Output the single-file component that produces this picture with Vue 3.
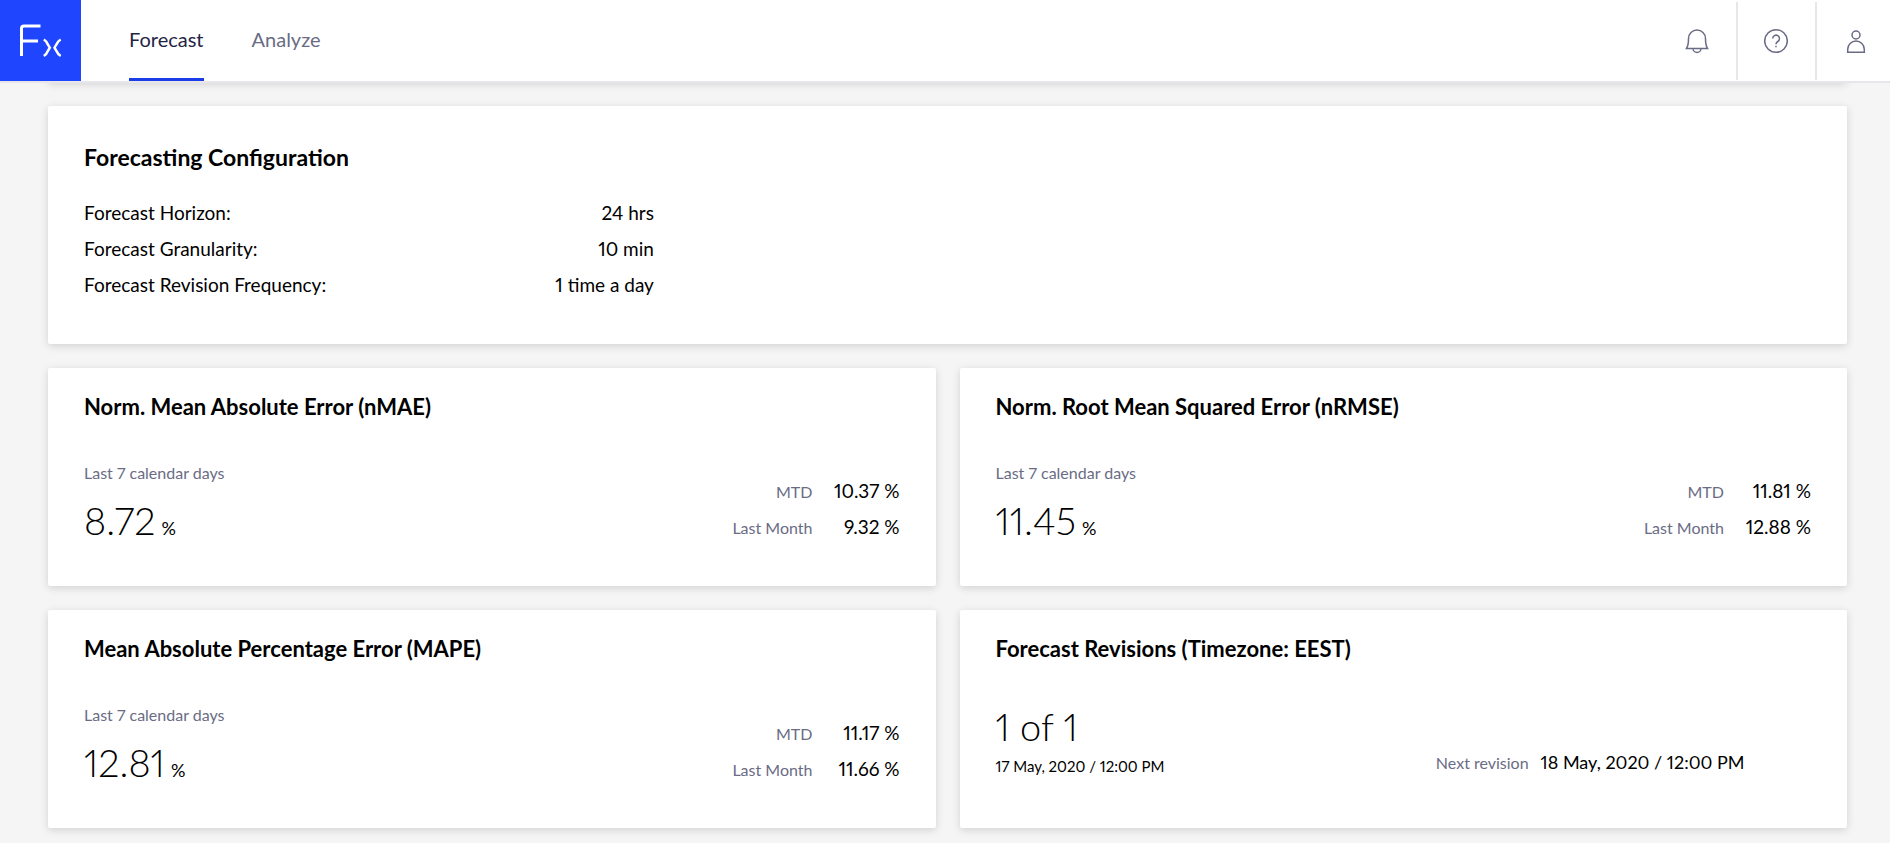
<script setup>
import { ref } from 'vue';

const tabs = ['Forecast', 'Analyze'];
const activeTab = ref('Forecast');

const configuration = [
  { label: 'Forecast Horizon:', value: '24 hrs' },
  { label: 'Forecast Granularity:', value: '10 min' },
  { label: 'Forecast Revision Frequency:', value: '1 time a day' }
];

const metrics = [
  { title: 'Norm. Mean Absolute Error (nMAE)', week: '8.72', mtd: '10.37', lastMonth: '9.32' },
  { title: 'Norm. Root Mean Squared Error (nRMSE)', week: '11.45', mtd: '11.81', lastMonth: '12.88' },
  { title: 'Mean Absolute Percentage Error (MAPE)', week: '12.81', mtd: '11.17', lastMonth: '11.66' }
];
</script>

<template>
  <div class="page">
    <header class="header">
      <a class="logo" href="#" aria-label="Fx home">
        <svg width="81" height="81" viewBox="0 0 81 81" fill="none" stroke="#fff">
          <path d="M21.500 56V28.500q0-2.500 2.500-2.500H40.500M22 41H38" stroke-width="3" />
          <path d="M43.800 39.500Q46.500 41 47.800 44.500L49.800 47.700L47.800 51Q46.500 54.500 43.800 56M60.700 39.500Q58 41 56.500 44.500L54.500 47.700L56.500 51Q58 54.500 60.700 56" stroke-width="2.500" />
        </svg>
      </a>
      <nav class="tabs">
        <a
          v-for="tab in tabs"
          :key="tab"
          href="#"
          class="tab"
          :class="{ active: tab === activeTab }"
          @click.prevent="activeTab = tab"
        >{{ tab }}</a>
      </nav>
      <div class="actions">
        <button class="action" type="button" aria-label="Notifications">
          <svg width="24" height="26" viewBox="0 0 24 26">
            <path d="M1.500 20.500C3 18 3.500 15 3.500 10.500a8.500 8.500 0 0 1 17 0C20.500 15 21 18 22.500 20.500z" />
            <path d="M8 20.500a4 4 0 0 0 8 0" />
          </svg>
        </button>
        <button class="action" type="button" aria-label="Help">
          <svg width="24" height="26" viewBox="0 0 24 26">
            <circle cx="12" cy="13" r="11.300" />
            <path d="M8.700 10.500a3.400 3.400 0 1 1 5.100 3q-1.800 1-1.800 2.700M12 17.700v1.600" />
          </svg>
        </button>
        <button class="action" type="button" aria-label="Account">
          <svg width="24" height="26" viewBox="0 0 24 26">
            <circle cx="12" cy="7" r="4" />
            <path d="M3.700 24.300v-3a8.300 8.300 0 0 1 16.600 0v3z" />
          </svg>
        </button>
      </div>
    </header>

    <main class="content">
      <section class="card tucked"></section>

      <section class="card config">
        <h2>Forecasting Configuration</h2>
        <dl class="config-list">
          <div v-for="item in configuration" :key="item.label" class="config-row">
            <dt>{{ item.label }}</dt>
            <dd>{{ item.value }}</dd>
          </div>
        </dl>
      </section>

      <div class="grid">
        <section v-for="metric in metrics" :key="metric.title" class="card metric">
          <h2>{{ metric.title }}</h2>
          <div class="metric-body">
            <div>
              <div class="label">Last 7 calendar days</div>
              <div class="big">{{ metric.week }}<span class="unit">%</span></div>
            </div>
            <dl class="side">
              <dt class="label">MTD</dt>
              <dd>{{ metric.mtd }} %</dd>
              <dt class="label">Last Month</dt>
              <dd>{{ metric.lastMonth }} %</dd>
            </dl>
          </div>
        </section>

        <section class="card metric">
          <h2>Forecast Revisions (Timezone: EEST)</h2>
          <div class="revision-body">
            <div class="current">
              <div class="big">1 of 1</div>
              <div class="date">17 May, 2020 / 12:00 PM</div>
            </div>
            <div class="next">
              <span class="label">Next revision</span>
              <span class="next-date">18 May, 2020 / 12:00 PM</span>
            </div>
          </div>
        </section>
      </div>
    </main>
  </div>
</template>

<style>
body {
  margin: 0;
  background: #f5f5f5;
}
</style>

<style scoped>
.page {
  font-family: Lato, "Liberation Sans", sans-serif;
  font-size: 19px;
  line-height: 24px;
  color: #000;
  font-feature-settings: "pnum";
}

.header {
  position: relative;
  z-index: 1;
  display: flex;
  height: 81px;
  background: #fff;
  border-bottom: 2px solid #e6e6eb;
}

.logo {
  width: 81px;
  background: #1f45ff;
}

.logo svg {
  display: block;
}

.tabs {
  display: flex;
  gap: 48px;
  margin-left: 48px;
}

.tab {
  box-sizing: border-box;
  padding-top: 27px;
  border-bottom: 3px solid transparent;
  color: #6a6c85;
  font-size: 20px;
  text-decoration: none;
}

.tab.active {
  color: #1f2544;
  border-bottom-color: #1a3de8;
}

.actions {
  display: flex;
  margin: 2px 0 1px auto;
}

.action {
  box-sizing: border-box;
  width: 79px;
  padding: 0 2px 0 0;
  border: 0;
  border-left: 2px solid #e6e6eb;
  background: none;
}

.action:first-child {
  border-left-color: transparent;
}

.action:last-child {
  width: 75px;
  padding: 0 0 0 4px;
}

.action svg {
  display: block;
  margin: 0 auto;
  fill: none;
  stroke: #6a6c85;
  stroke-width: 1.5;
}

.content {
  padding: 0 43px 14px 48px;
}

.card {
  background: #fff;
  border-radius: 2px;
  box-shadow: 0 2px 8px rgba(0, 0, 0, 0.15);
}

/* lower edge of the card scrolled under the header */
.tucked {
  height: 24px;
  margin-top: -25px;
}

.config {
  margin: 24px 0;
  padding: 39px 36px 41px;
}

h2 {
  margin: 0;
  font-size: 23px;
  line-height: 24px;
  font-weight: 700;
}

.config-list {
  width: 33%;
  margin: 26px 0 0;
}

.config-row {
  display: flex;
  justify-content: space-between;
  line-height: 36px;
}

dd {
  margin: 0;
}

.grid {
  display: grid;
  grid-template-columns: 1fr 1fr;
  gap: 24px;
}

.metric {
  box-sizing: border-box;
  height: 218px;
  padding: 27px 36px;
}

.metric h2 {
  font-size: 22px;
}

.metric-body {
  display: flex;
  align-items: flex-start;
  justify-content: space-between;
  margin-top: 42px;
}

.label {
  font-size: 16px;
  color: #6a6c85;
}

.big {
  margin-top: 11px;
  font-size: 38px;
  line-height: 48px;
  font-weight: 300;
}

.unit {
  margin-left: 6px;
  font-size: 18px;
  font-weight: 400;
}

.side {
  display: grid;
  grid-template-columns: auto 87px;
  grid-auto-rows: 36px;
  align-items: baseline;
  margin: 12px 0 0;
  line-height: 36px;
  text-align: right;
}

.revision-body {
  display: flex;
  margin-top: 41px;
}

.revision-body .big {
  margin-top: 0;
}

.current {
  width: 54%;
}

.date {
  margin-top: 4px;
  font-size: 15px;
}

.next {
  display: flex;
  align-items: baseline;
  gap: 12px;
  margin-top: 48px;
}

.next-date {
  font-size: 18px;
}
</style>
